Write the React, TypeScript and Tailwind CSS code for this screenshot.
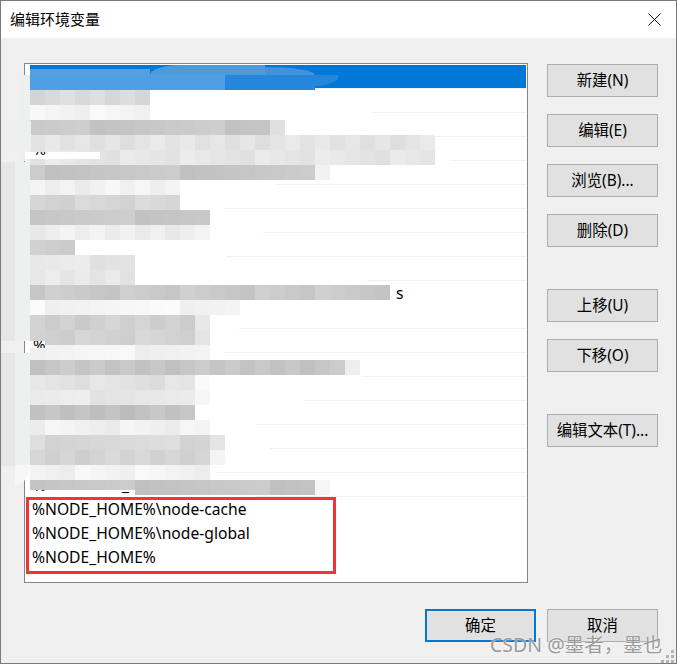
const FONT = '"Noto Sans", "Noto Sans CJK SC", sans-serif';

// where the row separator becomes visible (the mosaic smears the part before it)
const lineFrom = [0, 343, 0, 421, 247, 194, 233, 196, 338, 365, 209, 195, 333, 274, 226, 240, 187, 226, 0, 0, 0];

const rowText: Record<number, string> = {
  18: '%NODE_HOME%\\node-cache',
  19: '%NODE_HOME%\\node-global',
  20: '%NODE_HOME%',
};

// [cells, base grey, grey of a last lighter cell]
const bands: [number, number, number?][] = [
  [8, 218],
  [8, 243],
  [16, 200, 224],
  [27, 228],
  [27, 230],
  [19, 198, 242],
  [10, 241],
  [10, 214],
  [12, 200],
  [12, 238],
  [3, 204],
  [7, 230],
  [7, 232],
  [24, 202],
  [14, 245],
  [11, 208, 232],
  [11, 210, 228],
  [12, 243],
  [21, 198, 238],
  [11, 226, 250],
  [11, 232, 246],
  [11, 194],
  [12, 240],
  [12, 216, 228],
  [12, 212, 244],
  [12, 243],
  [19, 198, 246],
];

const jitter = (i: number, j: number) => ((i * 7 + j * 13 + i * j * 3) % 9) * 1.5 - 6;

const MosaicBand = ({ index, cells, base, last }: { index: number; cells: number; base: number; last?: number }) => (
  <div className="flex h-[15px]">
    {Array.from({ length: cells + (last ? 1 : 0) }).map((_, j) => {
      const g = j === cells ? last! : Math.round(base + jitter(index, j));
      return <div key={j} className="w-[15px] h-full" style={{ background: `rgb(${g},${g},${g + 1})` }} />;
    })}
  </div>
);

const DialogButton = ({ label, primary }: { label: string; primary?: boolean }) => (
  <button
    className={`w-[111px] h-[33px] bg-[#e1e1e1] text-[15.4px] leading-none text-black ${
      primary ? 'border-2 border-[#0078d7]' : 'border border-[#adadad]'
    }`}
  >
    {label}
  </button>
);

export default function App() {
  return (
    <div
      className="relative w-[677px] h-[664px] overflow-hidden flex flex-col bg-[#f0f0f0] border border-[#7a7a7a]"
      style={{ fontFamily: FONT }}
    >
      <div className="h-[37px] shrink-0 bg-white flex items-center justify-between pl-[9px] pr-[15px]">
        <span className="text-[15px] text-black">编辑环境变量</span>
        <svg width="13" height="13" viewBox="0 0 13 13" stroke="#111" strokeWidth="1">
          <path d="M0.5 0.5L12.5 12.5M12.5 0.5L0.5 12.5" />
        </svg>
      </div>

      <div className="flex pl-[23px] pt-[25px]">
        <div className="w-[504px] h-[520px] bg-white border border-[#82878f] pl-[5px] pr-px pt-px">
          {lineFrom.map((from, i) => (
            <div key={i} className="h-[24px] flex flex-col">
              <div
                className={`flex-1 flex items-center pl-[2px] pt-px text-[15.65px] text-black ${
                  i === 0 ? 'bg-[#0078d7]' : 'bg-white'
                }`}
              >
                {i === 9 ? <span className="ml-[364px]">s</span> : rowText[i]}
              </div>
              <div className="h-px bg-[#f0f0f0]" style={{ marginLeft: from }} />
            </div>
          ))}
        </div>

        <div className="ml-[19px] pt-px flex flex-col">
          <div className="flex flex-col gap-[17px]">
            <DialogButton label="新建(N)" />
            <DialogButton label="编辑(E)" />
            <DialogButton label="浏览(B)..." />
            <DialogButton label="删除(D)" />
          </div>
          <div className="mt-[42px] flex flex-col gap-[17px]">
            <DialogButton label="上移(U)" />
            <DialogButton label="下移(O)" />
          </div>
          <div className="mt-[42px]">
            <DialogButton label="编辑文本(T)..." />
          </div>
        </div>
      </div>

      <div className="mt-[26px] pl-[424px] flex gap-[11px]">
        <DialogButton label="确定" primary />
        <DialogButton label="取消" />
      </div>

      {/* privacy mosaic over the list */}
      <div className="absolute left-[29px] top-[68px] h-[6px] w-[120px] bg-[#5a9fdb]" />
      <div className="absolute left-[149px] top-[64px] h-[10px] w-[115px] rounded-tl-[30px_10px] bg-[#4f9ad9]" />
      <div className="absolute left-[264px] top-[66px] h-[8px] w-[50px] rounded-tr-[50px_8px] bg-[#4592da]" />
      <div className="absolute left-[29px] top-[74px] flex h-[15px]">
        <div className="w-[195px] h-full bg-[#4f9fe4]" />
        <div className="w-[90px] h-full bg-[#2587dc]" />
        <div className="w-[24px] h-[11px] rounded-br-[24px_11px] bg-[#2587dc]" />
      </div>
      <div className="absolute left-[29px] top-[89px] flex flex-col">
        {bands.map(([cells, base, last], i) => (
          <MosaicBand key={i} index={i} cells={cells} base={base} last={last} />
        ))}
      </div>

      {/* smear along the left edge */}
      <div className="absolute left-[19px] top-[74px] w-[10px] h-[86px] bg-[#eef0ef]" />
      <div className="absolute left-[8px] top-[120px] w-[22px] h-[30px] rounded-l-[16px] bg-[#eef0ef]" />
      <div className="absolute -left-px top-[161px] flex h-[179px]">
        <div className="w-[15px] h-full bg-[#e6e6e6]" />
        <div className="w-[15px] h-full bg-[#eef0ef]" />
      </div>
      <div className="absolute -left-px top-[352px] flex h-[113px]">
        <div className="w-[15px] h-full bg-[#e6e6e6]" />
        <div className="w-[15px] h-full bg-[#eef0ef]" />
      </div>
      <div className="absolute left-[14px] top-[464px] w-[15px] h-[20px] rounded-br-[15px_20px] bg-[#f6f7f6]" />

      {/* clipped text left showing at the mosaic edge */}
      <div className="absolute left-[24px] top-[151px] w-[75px] h-[7px] overflow-hidden bg-white pl-[8px] text-[15.65px] text-black">
        <div className="-mt-[15px] leading-[24px]">%</div>
      </div>
      <div className="absolute left-[24px] top-[340px] w-[20px] h-[7px] overflow-hidden bg-white pl-[8px] text-[15px] leading-[7px] text-black">
        %
      </div>
      <div className="absolute left-[24px] top-[489px] w-[110px] h-[7px] overflow-hidden bg-white pl-[8px] text-[15.65px] text-black">
        <div className="-mt-[17px] leading-[24px] flex">
          <span className="w-[89px]">%</span>
          <span>_</span>
        </div>
      </div>

      {/* red highlight */}
      <div className="absolute left-[25px] top-[496px] w-[310px] h-[77px] border-[3px] border-[#f33434]" />

      {/* watermark */}
      <div className="absolute left-[489px] top-[631px] text-[19.5px] leading-[26px] text-[#9a9a9a] whitespace-nowrap [text-shadow:0_0_2px_white]">
        CSDN @墨者，墨也
      </div>
      <svg className="absolute right-0 bottom-0" width="15" height="14" viewBox="0 0 15 14" fill="#b4b4b4">
        <rect x="10" y="1" width="3" height="3" />
        <rect x="5" y="6" width="3" height="3" />
        <rect x="10" y="6" width="3" height="3" />
        <rect x="0" y="11" width="3" height="3" />
        <rect x="5" y="11" width="3" height="3" />
        <rect x="10" y="11" width="3" height="3" />
      </svg>
    </div>
  );
}
